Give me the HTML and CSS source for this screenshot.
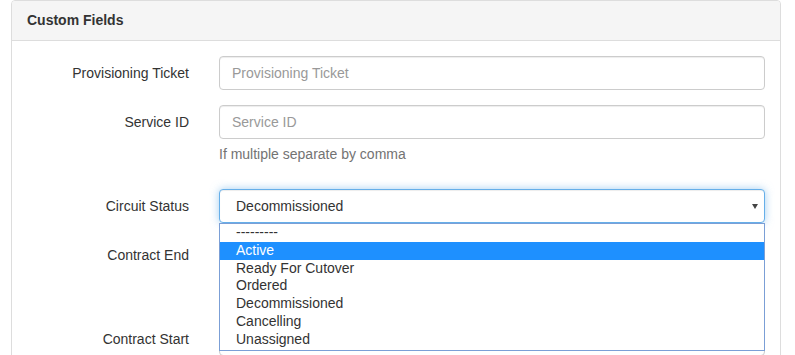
FILE: index.html
```html
<!DOCTYPE html>
<html lang="en">
<head>
<meta charset="utf-8">
<title>Custom Fields</title>
<link rel="stylesheet" href="styles.css">
</head>
<body>
<div class="page">
  <div class="panel">
    <div class="panel-heading">Custom Fields</div>
    <div class="panel-body">
      <div class="form-group">
        <label class="control-label">Provisioning Ticket</label>
        <div class="field">
          <input class="form-control" type="text" placeholder="Provisioning Ticket">
        </div>
      </div>
      <div class="form-group">
        <label class="control-label">Service ID</label>
        <div class="field">
          <input class="form-control" type="text" placeholder="Service ID">
          <div class="help-block">If multiple separate by comma</div>
        </div>
      </div>
      <div class="form-group">
        <label class="control-label">Circuit Status</label>
        <div class="field">
          <div class="select-wrap">
            <div class="form-control select focused">
              <span>Decommissioned</span>
              <span class="caret"></span>
            </div>
            <ul class="dropdown">
              <li>---------</li>
              <li class="selected">Active</li>
              <li>Ready For Cutover</li>
              <li>Ordered</li>
              <li>Decommissioned</li>
              <li>Cancelling</li>
              <li>Unassigned</li>
            </ul>
          </div>
        </div>
      </div>
      <div class="form-group">
        <label class="control-label">Contract End</label>
        <div class="field">
          <input class="form-control" type="text">
          <div class="help-block spacer"></div>
        </div>
      </div>
      <div class="form-group">
        <label class="control-label">Contract Start</label>
        <div class="field">
          <input class="form-control" type="text">
        </div>
      </div>
    </div>
  </div>
</div>
</body>
</html>
```

FILE: styles.css
```css
* { box-sizing: border-box; }

html, body {
  margin: 0;
  padding: 0;
  background: #fff;
  font-family: "Liberation Sans", Arial, sans-serif;
  font-size: 14px;
  line-height: 20px;
  color: #333;
}

.page {
  padding: 0 14px 0 11px;
  height: 355px;
  overflow: hidden;
}

.panel {
  border: 1px solid #ddd;
  border-radius: 4px;
  background: #fff;
}

.panel-heading {
  background: #f5f5f5;
  border-bottom: 1px solid #ddd;
  border-radius: 3px 3px 0 0;
  padding: 10px 15px 10px;
  font-weight: bold;
  font-size: 14px;
  line-height: 19px;
  color: #333;
}

.panel-body {
  padding: 15px 0;
}

.form-group {
  display: grid;
  grid-template-columns: 25% 75%;
  margin-bottom: 15px;
}

.control-label {
  text-align: right;
  padding: 7px 15px 0 15px;
  font-weight: normal;
  color: #333;
}

.field {
  padding: 0 15px;
}

.form-control {
  display: block;
  width: 100%;
  height: 34px;
  padding: 6px 12px;
  font-family: inherit;
  font-size: 14px;
  line-height: 20px;
  color: #555;
  background: #fff;
  border: 1px solid #ccc;
  border-radius: 4px;
  box-shadow: inset 0 1px 1px rgba(0,0,0,.075);
  outline: none;
  margin: 0;
}

.form-control::placeholder {
  color: #999;
}

.help-block {
  margin: 5px 0 10px;
  color: #737373;
  min-height: 20px;
}

.select-wrap {
  position: relative;
}

.select {
  display: flex;
  align-items: center;
  justify-content: space-between;
  padding: 6px 6px 6px 16px;
  color: #333;
}

.select.focused {
  border-color: #66afe9;
  box-shadow: inset 0 1px 1px rgba(0,0,0,.075), 0 0 8px rgba(102,175,233,.6);
}

.caret {
  width: 0;
  height: 0;
  border-left: 3.5px solid transparent;
  border-right: 3.5px solid transparent;
  border-top: 5px solid #444;
  margin-top: 1px;
}

.dropdown {
  position: absolute;
  top: 100%;
  left: 0;
  right: 0;
  margin: 0;
  padding: 0 0 1px;
  list-style: none;
  background: #fff;
  border: 1px solid #7b9fd6;
  z-index: 10;
}

.dropdown li {
  height: 17.8px;
  line-height: 17.8px;
  padding-left: 16px;
  color: #333;
  white-space: nowrap;
}

.dropdown li.selected {
  background: #1e90ff;
  color: #fff;
}
```
